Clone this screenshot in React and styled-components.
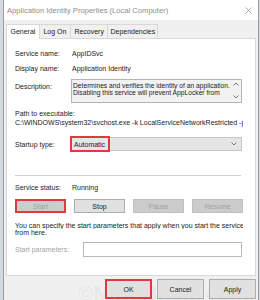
import React from "react";
import styled, { createGlobalStyle } from "styled-components";

const GlobalStyle = createGlobalStyle`
  html, body { margin: 0; padding: 0; background: #d3d9de; }
  body {
    font-family: "Liberation Sans", Arial, sans-serif;
    font-size: 7px;
    color: #1b1b1b;
  }
  #root { width: 260px; height: 300px; overflow: hidden; }
`;

const RED = "#e0393e";

const Window = styled.div`
  position: relative;
  margin-left: 3px;
  width: 256px;
  height: 300px;
  box-sizing: border-box;
  border-left: 1px solid #9c9c9c;
  border-right: 1px solid #9c9c9c;
  background: #f0f0f0;
  overflow: hidden;
`;

const TitleBar = styled.div`
  height: 20px;
  background: #ffffff;
  display: flex;
  align-items: center;
  justify-content: space-between;
  padding: 0 6px 0 3px;
`;

const Title = styled.span`
  font-size: 7.6px;
  color: #8e8e8e;
  white-space: nowrap;
`;

const Body = styled.div`
  padding: 4px 2px 0 2px;
`;

const TabRow = styled.div`
  display: flex;
  align-items: flex-end;
  height: 14px;
`;

const Tab = styled.div`
  box-sizing: border-box;
  height: ${(p) => (p.$active ? "15px" : "14px")};
  margin-bottom: ${(p) => (p.$active ? "-1px" : "0")};
  margin-left: ${(p) => (p.$first ? "0" : "-1px")};
  padding: 0 ${(p) => p.$pad}px ${(p) => (p.$active ? "1px" : "0")};
  display: flex;
  align-items: center;
  border: 1px solid #d9d9d9;
  border-bottom: none;
  background: ${(p) => (p.$active ? "#ffffff" : "#f0f0f0")};
  position: relative;
  z-index: ${(p) => (p.$active ? 1 : 0)};
  white-space: nowrap;
`;

const Panel = styled.div`
  box-sizing: border-box;
  height: 238px;
  background: #ffffff;
  border: 1px solid #d9d9d9;
  padding: 0 12px 0 8px;
  display: flex;
  flex-direction: column;
`;

const Row = styled.div`
  display: flex;
  align-items: ${(p) => p.$align || "center"};
  height: ${(p) => p.$h}px;
  margin-top: ${(p) => p.$mt}px;
  flex-shrink: 0;
`;

const Label = styled.div`
  width: ${(p) => p.$w}px;
  flex-shrink: 0;
  white-space: nowrap;
  color: ${(p) => (p.$disabled ? "#a3a3a3" : "#1b1b1b")};
  padding-top: ${(p) => p.$pt || 0}px;
`;

const Value = styled.div`
  white-space: nowrap;
`;

const Line = styled.div`
  height: ${(p) => p.$h}px;
  line-height: ${(p) => p.$h}px;
  margin-top: ${(p) => p.$mt || 0}px;
  white-space: nowrap;
  overflow: hidden;
  flex-shrink: 0;
`;

const DescBox = styled.div`
  box-sizing: border-box;
  width: 171px;
  height: 24px;
  border: 1px solid #b4b4b4;
  background: #f2f2f2;
  display: flex;
`;

const DescText = styled.div`
  flex: 1;
  padding: 1.5px 0 0 1px;
  font-size: 6.7px;
  line-height: 7px;
  white-space: nowrap;
  overflow: hidden;
`;

const ScrollCol = styled.div`
  width: 10px;
  display: flex;
  flex-direction: column;
  justify-content: space-between;
  align-items: center;
  padding: 2px 0 3px;
`;

const Dropdown = styled.div`
  box-sizing: border-box;
  width: 172px;
  height: 14px;
  border: 1px solid #c6c6c6;
  background: #e6e6e6;
  display: flex;
  align-items: center;
`;

const Highlight = styled.div`
  box-sizing: border-box;
  height: 16px;
  margin: -1px 0 -1px -1px;
  border: 2px solid ${RED};
  padding: 0 3px 0 2px;
  display: flex;
  align-items: center;
  white-space: nowrap;
`;

const Chevron = styled.div`
  margin-left: auto;
  padding-right: 4px;
  display: flex;
  align-items: center;
`;

const Separator = styled.div`
  height: 1px;
  margin: 24px 2px 0 0;
  background: #cfcfcf;
  flex-shrink: 0;
`;

const ButtonRow = styled.div`
  display: flex;
  justify-content: space-between;
  margin-top: ${(p) => p.$mt}px;
  flex-shrink: 0;
`;

const Btn = styled.div`
  box-sizing: border-box;
  width: ${(p) => p.$w}px;
  height: ${(p) => p.$h}px;
  display: flex;
  align-items: center;
  justify-content: center;
  background: ${(p) => (p.$disabled ? "#cccccc" : "#e1e1e1")};
  color: ${(p) => (p.$disabled ? "#a0a0a0" : "#1b1b1b")};
  border: ${(p) => (p.$hl ? `2px solid ${RED}` : p.$disabled ? "1px solid #bfbfbf" : "1px solid #adadad")};
  white-space: nowrap;
  position: relative;
  z-index: 1;
`;

const InputBox = styled.div`
  box-sizing: border-box;
  width: 159px;
  height: 15px;
  border: 1px solid #b9b9b9;
  background: #ffffff;
`;

const Footer = styled.div`
  display: flex;
  justify-content: flex-end;
  gap: 5px;
  margin-top: 3px;
`;

const Watermark = styled.div`
  position: absolute;
  left: 74px;
  top: 281px;
  font-family: "Liberation Sans", Arial, sans-serif;
  font-weight: bold;
  font-size: 21px;
  color: rgba(110, 110, 110, 0.07);
  white-space: nowrap;
  pointer-events: none;
  z-index: 0;
`;

const ChevronIcon = ({ up }) => (
  <svg width="6" height="4" viewBox="0 0 6 4">
    <path
      d={up ? "M0.5 3.5 L3 1 L5.5 3.5" : "M0.5 0.5 L3 3 L5.5 0.5"}
      fill="none"
      stroke="#6a6a6a"
      strokeWidth="0.9"
    />
  </svg>
);

export default function App() {
  return (
    <>
      <GlobalStyle />
      <Window>
        <TitleBar>
          <Title>Application Identity Properties (Local Computer)</Title>
          <svg width="7" height="7" viewBox="0 0 7 7">
            <path d="M0.5 0.5 L6.5 6.5 M6.5 0.5 L0.5 6.5" stroke="#9a9a9a" strokeWidth="0.8" />
          </svg>
        </TitleBar>
        <Body>
          <TabRow>
            <Tab $active $first $pad={3.5}>General</Tab>
            <Tab $pad={3.5}>Log On</Tab>
            <Tab $pad={3.5}>Recovery</Tab>
            <Tab $pad={2}>Dependencies</Tab>
          </TabRow>
          <Panel>
            <Row $h={12} $mt={8}>
              <Label $w={57}>Service name:</Label>
              <Value>AppIDSvc</Value>
            </Row>
            <Row $h={12} $mt={3}>
              <Label $w={57}>Display name:</Label>
              <Value>Application Identity</Value>
            </Row>
            <Row $h={24} $mt={5} $align="flex-start">
              <Label $w={56} $pt={4}>Description:</Label>
              <DescBox>
                <DescText>
                  Determines and verifies the identity of an application.
                  <br />
                  Disabling this service will prevent AppLocker from
                </DescText>
                <ScrollCol>
                  <ChevronIcon up />
                  <ChevronIcon />
                </ScrollCol>
              </DescBox>
            </Row>
            <Line $h={9} $mt={6}>Path to executable:</Line>
            <Line $h={9}>
              C:\WINDOWS\system32\svchost.exe -k LocalServiceNetworkRestricted -p
            </Line>
            <Row $h={14} $mt={10}>
              <Label $w={55}>Startup type:</Label>
              <Dropdown>
                <Highlight>Automatic</Highlight>
                <Chevron>
                  <ChevronIcon />
                </Chevron>
              </Dropdown>
            </Row>
            <Separator />
            <Row $h={10} $mt={6}>
              <Label $w={57}>Service status:</Label>
              <Value>Running</Value>
            </Row>
            <ButtonRow $mt={7}>
              <Btn $w={51} $h={14} $disabled $hl>Start</Btn>
              <Btn $w={51} $h={14}>Stop</Btn>
              <Btn $w={51} $h={14} $disabled>Pause</Btn>
              <Btn $w={51} $h={14} $disabled>Resume</Btn>
            </ButtonRow>
            <Line $h={7} $mt={9}>
              You can specify the start parameters that apply when you start the service
            </Line>
            <Line $h={7}>from here.</Line>
            <Row $h={15} $mt={6}>
              <Label $w={68} $disabled>Start parameters:</Label>
              <InputBox />
            </Row>
          </Panel>
          <Footer>
            <Btn $w={47} $h={20} $hl>OK</Btn>
            <Btn $w={47} $h={20}>Cancel</Btn>
            <Btn $w={47} $h={20}>Apply</Btn>
          </Footer>
        </Body>
        <Watermark>©MeraBheja.com</Watermark>
      </Window>
    </>
  );
}
